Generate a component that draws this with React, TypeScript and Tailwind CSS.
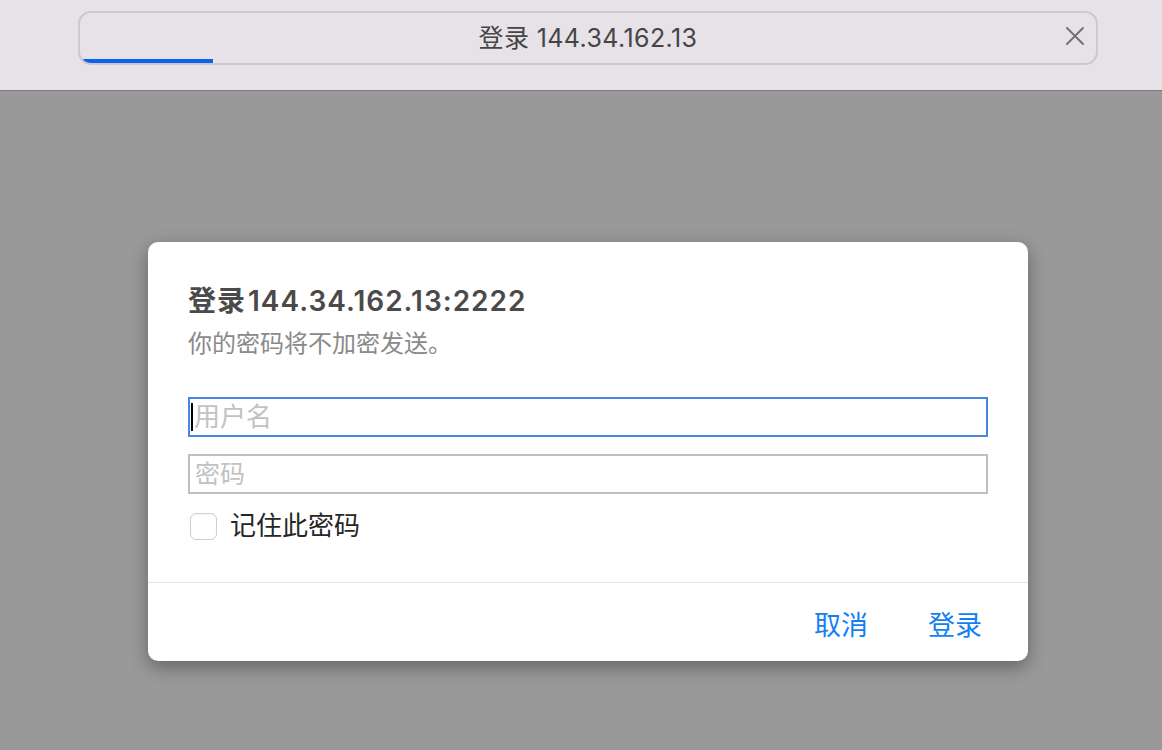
import React from "react";

const font = { fontFamily: 'Inter, "Noto Sans CJK SC", sans-serif' };

export default function App() {
  return (
    <div className="w-[1162px] h-[750px] flex flex-col overflow-hidden" style={font}>
      <header className="h-[91px] shrink-0 bg-[#e7e2e8] border-b border-[#7c7a7c] pt-[11px] pl-[78px]">
        <div className="relative w-[1020px] h-[54px] rounded-[13px] border-2 border-[#cdc8cd] overflow-hidden flex items-center justify-center">
          <span className="text-[25px] leading-[30px] text-[#454545] tracking-[0.4px]">登录 144.34.162.13</span>
          <svg className="absolute right-[12px] top-[14px]" width="18" height="18" viewBox="0 0 18 18">
            <path d="M1 1 L17 17 M17 1 L1 17" stroke="#6e6e6e" strokeWidth="1.8" strokeLinecap="round" />
          </svg>
          <div className="absolute left-[3px] bottom-0 w-[130px] h-[4px] bg-[#0a63e8]" />
        </div>
      </header>

      <main className="flex-1 bg-[#999999] pt-[151px] pl-[148px]">
        <div className="w-[880px] h-[419px] bg-white rounded-[10px] shadow-[0_6px_18px_rgba(0,0,0,0.35)] flex flex-col">
          <div className="flex-1 px-[40px] pt-[42px]">
            <h1 className="text-[28px] leading-[34px] font-semibold text-[#4a4a4a] tracking-[1px]">
              登录<span className="ml-[2px]">144.34.162.13:2222</span>
            </h1>
            <p className="mt-[11px] text-[24px] leading-[30px] text-[#8a8a8a]">你的密码将不加密发送。</p>

            <div className="mt-[38px] w-[800px] h-[40px] border-2 border-[#4a85de] flex items-center pl-[4px] relative">
              <div className="absolute left-[1px] top-[4px] w-[2px] h-[28px] bg-black" />
              <span className="text-[26px] leading-[30px] text-[#c2c2c2]">用户名</span>
            </div>
            <div className="mt-[17px] w-[800px] h-[40px] border-2 border-[#c0c0c0] flex items-center pl-[5px]">
              <span className="text-[25px] leading-[30px] text-[#c2c2c2]">密码</span>
            </div>

            <label className="mt-[17px] flex items-center gap-[13px] h-[30px]">
              <span className="ml-[2px] w-[27px] h-[27px] rounded-[6px] border border-[#cfcfcf] bg-white shadow-[inset_0_1px_1px_rgba(0,0,0,0.04)]" />
              <span className="text-[26px] leading-[30px] text-[#262626]">记住此密码</span>
            </label>
          </div>

          <div className="h-[79px] border-t border-[#e4e4e4] flex items-center justify-end pr-[46px] pt-[8px] gap-[60px]">
            <span className="text-[27px] leading-[32px] text-[#137ff5]">取消</span>
            <span className="text-[27px] leading-[32px] text-[#137ff5]">登录</span>
          </div>
        </div>
      </main>
    </div>
  );
}
